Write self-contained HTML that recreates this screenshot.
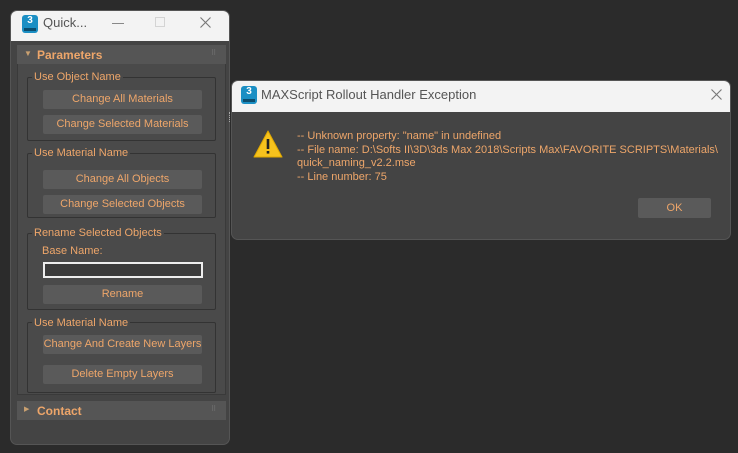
<!DOCTYPE html>
<html><head><style>
*{margin:0;padding:0;box-sizing:border-box}
body{width:738px;height:453px;background:#2b2b2b;font-family:"Liberation Sans",sans-serif;font-size:11px;color:#eea66a;position:relative;overflow:hidden}
.a{position:absolute}
.win{background:#444;border:1px solid #555;border-radius:7px;overflow:hidden}
.tb{background:#f3f3f3;color:#555;font-size:13px}
.btn{position:absolute;background:#5a5a5a;border-radius:2px;text-align:center;line-height:18px;height:19px;left:43px;width:159px;color:#eea66a;font-size:11px}
.grp{position:absolute;left:27px;width:189px;border:1px solid #333;border-radius:2px}
.gl{position:absolute;left:32px;background:#4a4a4a;padding:0 2px;font-size:11px;line-height:12px}
.ico{position:absolute;width:16px;height:18px;background:#1b8fc4;border-radius:3px;color:#fff;font-size:10px;font-weight:bold;text-align:center;line-height:12px}
.ico:after{content:"";position:absolute;left:2px;right:2px;bottom:2px;height:3px;background:#0c4d6e}
</style></head><body>
<div class="a win" style="left:10px;top:10px;width:220px;height:435px">
 <div class="a tb" style="left:0;top:0;width:220px;height:30px"></div>
</div>
<div class="ico" style="left:22px;top:15px">3</div>
<div class="a" style="left:43px;top:15px;color:#555;font-size:13px">Quick...</div>
<div class="a" style="left:112px;top:23px;width:12px;height:1px;background:#888"></div>
<div class="a" style="left:155px;top:17px;width:10px;height:10px;border:1px solid #d4d4d4"></div>
<svg class="a" style="left:200px;top:17px" width="11" height="11"><path d="M0.5 0.5L10.5 10.5M10.5 0.5L0.5 10.5" stroke="#777" stroke-width="1.1"/></svg>
<div class="a" style="left:17px;top:45px;width:209px;height:350px;background:#4a4a4a;border:1px solid #3a3a3a"></div>
<div class="a" style="left:17px;top:45px;width:209px;height:19px;background:#555"></div>
<div class="a" style="left:24px;top:49px;font-size:8px;color:#c9a070">▼</div>
<div class="a" style="left:37px;top:48px;font-weight:bold;font-size:12px">Parameters</div>
<div class="a" style="left:211px;top:49px;color:#777;font-size:7px">⠿</div>

<div class="grp" style="top:77px;height:64px"></div><div class="gl" style="top:71px">Use Object Name</div>
<div class="btn" style="top:90px">Change All Materials</div>
<div class="btn" style="top:115px">Change Selected Materials</div>

<div class="grp" style="top:153px;height:65px"></div><div class="gl" style="top:147px">Use Material Name</div>
<div class="btn" style="top:170px">Change All Objects</div>
<div class="btn" style="top:195px">Change Selected Objects</div>

<div class="grp" style="top:233px;height:77px"></div><div class="gl" style="top:227px">Rename Selected Objects</div>
<div class="a" style="left:42px;top:245px">Base Name:</div>
<div class="a" style="left:43px;top:262px;width:160px;height:16px;background:#3c3c3c;border:2px solid #eee"></div>
<div class="btn" style="top:285px">Rename</div>

<div class="grp" style="top:322px;height:71px"></div><div class="gl" style="top:317px">Use Material Name</div>
<div class="btn" style="top:335px">Change And Create New Layers</div>
<div class="btn" style="top:365px">Delete Empty Layers</div>

<div class="a" style="left:17px;top:401px;width:209px;height:19px;background:#555"></div>
<div class="a" style="left:24px;top:405px;font-size:7px;color:#c9a070">▶</div>
<div class="a" style="left:37px;top:404px;font-weight:bold;font-size:12px">Contact</div>
<div class="a" style="left:211px;top:405px;color:#777;font-size:7px">⠿</div>

<div class="a win" style="left:231px;top:80px;width:500px;height:160px">
 <div class="a tb" style="left:0;top:0;width:500px;height:31px"></div>
</div>
<div class="ico" style="left:241px;top:86px">3</div>
<div class="a" style="left:261px;top:87px;color:#555;font-size:13px">MAXScript Rollout Handler Exception</div>
<svg class="a" style="left:711px;top:89px" width="11" height="11"><path d="M0.5 0.5L10.5 10.5M10.5 0.5L0.5 10.5" stroke="#777" stroke-width="1.1"/></svg>
<svg class="a" style="left:253px;top:129px" width="30" height="30" viewBox="0 0 30 30"><path d="M15 2 L29 28 L1 28 Z" fill="#f6c21d" stroke="#e0a800" stroke-linejoin="round"/><rect x="13.7" y="10" width="2.6" height="10" fill="#222"/><rect x="13.7" y="22" width="2.6" height="2.6" fill="#222"/></svg>
<div class="a" style="left:297px;top:130px;line-height:13.5px;font-size:11px">-- Unknown property: "name" in undefined<br>-- File name: D:\Softs II\3D\3ds Max 2018\Scripts Max\FAVORITE SCRIPTS\Materials\<br>quick_naming_v2.2.mse<br>-- Line number: 75</div>
<div class="a" style="left:638px;top:198px;width:73px;height:20px;background:#5a5a5a;border-radius:2px;text-align:center;line-height:20px">OK</div>
<div class="a" style="left:229px;top:112px;width:2px;height:10px;border-left:1px dotted #aaa"></div>
</body></html>
